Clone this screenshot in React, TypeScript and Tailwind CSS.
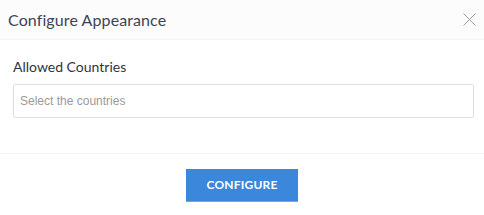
import React from 'react';

export default function App() {
  return (
    <div className="w-[484px] h-[215px] bg-white flex flex-col font-['Lato',sans-serif] overflow-hidden">
      <div className="h-[40px] bg-[#fcfcfc] border-b border-[#f3f3f3] flex items-center justify-between pl-[8px] pr-[8px]">
        <h3 className="text-[16px] text-[#3e4453] tracking-[0.1px]">Configure Appearance</h3>
        <button className="w-[14px] h-[14px] flex items-center justify-center">
          <svg width="13" height="13" viewBox="0 0 13 13" fill="none" stroke="#9a9a9a" strokeWidth="1">
            <path d="M0.5 0.5L12.5 12.5M12.5 0.5L0.5 12.5" />
          </svg>
        </button>
      </div>
      <div className="pl-[13px] pr-[10px] pt-[18px] pb-[35px] border-b border-[#f3f3f3]">
        <label className="block text-[14px] text-[#2f3340] leading-[17px] mb-[9px]">Allowed Countries</label>
        <div className="h-[34px] border border-[#dedede] rounded-[2px] flex items-center px-[6px]">
          <span className="text-[12px] text-[#9a9a9a] font-['Liberation_Sans',sans-serif]">Select the countries</span>
        </div>
      </div>
      <div className="flex justify-center pt-[15px]">
        <button className="w-[112px] h-[33px] bg-[#3a87dc] border-b border-[#6aa6e8] text-white text-[12px] font-bold tracking-[0.2px]">
          CONFIGURE
        </button>
      </div>
    </div>
  );
}
